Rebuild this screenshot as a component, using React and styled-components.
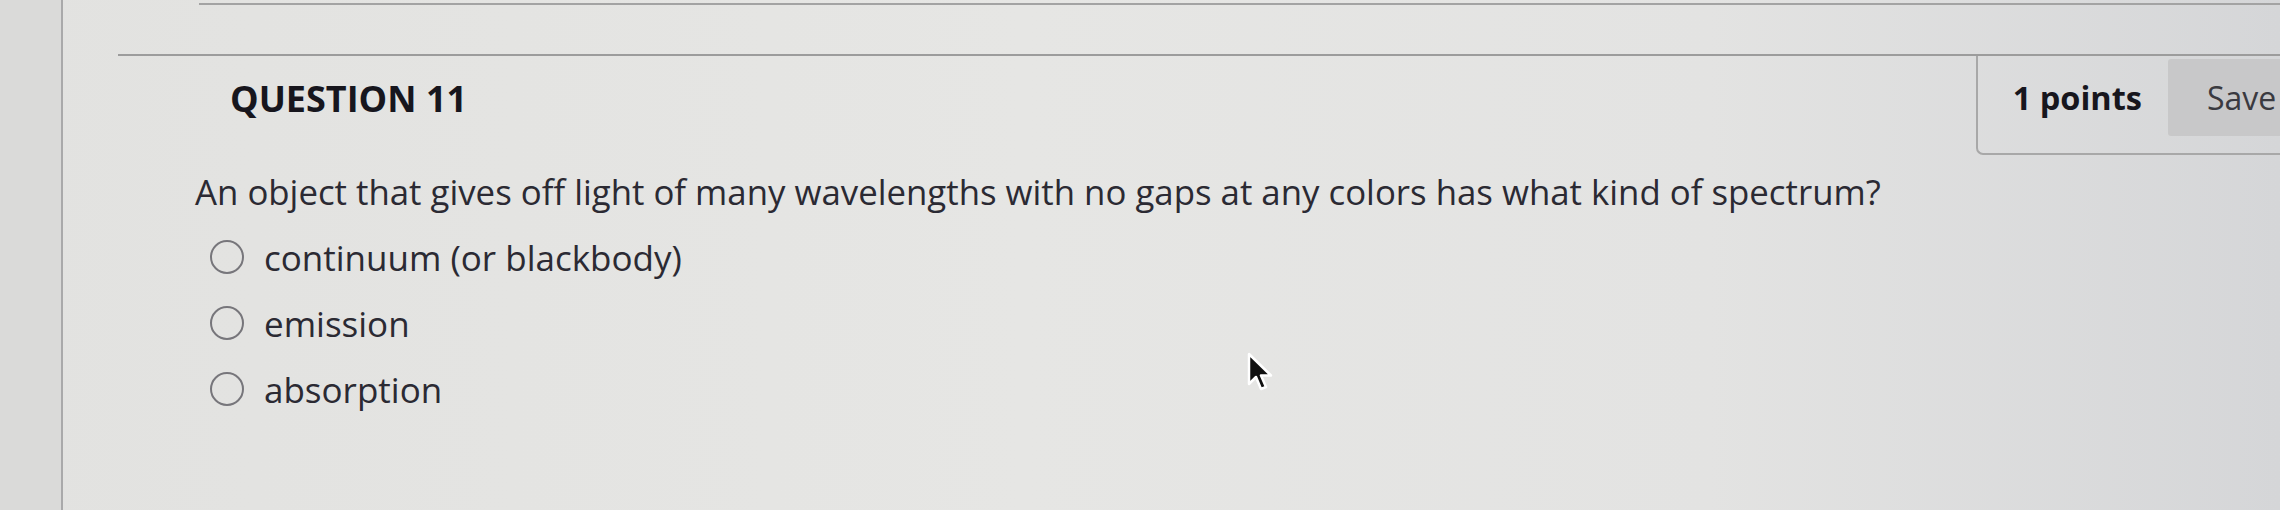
import React from 'react';
import styled, { createGlobalStyle } from 'styled-components';

const GlobalStyle = createGlobalStyle`
  html, body {
    margin: 0;
    padding: 0;
    background: #e3e3e1;
  }
  body {
    font-family: 'Open Sans', 'Noto Sans', sans-serif;
    color: #2b2a33;
  }
`;

const Page = styled.div`
  position: relative;
  display: flex;
  width: 2280px;
  height: 510px;
  overflow: hidden;
  background: linear-gradient(90deg, #e2e2e0 0%, #e6e6e4 45%, #e3e3e2 75%, #d5d6d8 100%);
`;

const Gutter = styled.div`
  width: 61px;
  flex-shrink: 0;
  background: #dadad9;
  border-right: 2px solid #a9a9aa;
`;

const Main = styled.div`
  flex: 1;
  display: flex;
  flex-direction: column;
`;

const TopRule = styled.div`
  margin: 3px 0 0 136px;
  border-top: 2px solid #a3a3a3;
`;

const Header = styled.div`
  display: flex;
  justify-content: space-between;
  align-items: flex-start;
  margin: 49px 0 0 55px;
  border-top: 2px solid #9c9c9c;
`;

const Title = styled.h2`
  margin: 0;
  padding: 21px 0 0 112px;
  font-size: 36px;
  font-weight: 700;
  line-height: 44px;
  color: #17161d;
`;

const PointsBox = styled.div`
  display: flex;
  align-items: flex-start;
  height: 97px;
  padding-left: 35px;
  border-left: 2px solid #a8a8a8;
  border-bottom: 2px solid #a8a8a8;
  border-bottom-left-radius: 7px;
`;

const Points = styled.span`
  margin-top: 20px;
  font-size: 32.5px;
  font-weight: 700;
  line-height: 44px;
  color: #17161d;
  white-space: nowrap;
`;

const SaveButton = styled.button`
  margin: 3px 0 0 26px;
  width: 112px;
  height: 77px;
  padding: 0 0 0 39px;
  border: none;
  border-top-left-radius: 3px;
  border-bottom-left-radius: 3px;
  background: #c8c8c9;
  font-family: 'Open Sans', 'Noto Sans', sans-serif;
  font-size: 32px;
  color: #3a3a40;
  text-align: left;
  white-space: nowrap;
  overflow: hidden;
`;

const Body = styled.div`
  display: flex;
  flex-direction: column;
  padding-left: 132px;
`;

const QuestionText = styled.p`
  margin: 15px 0 0;
  font-size: 34.8px;
  line-height: 44px;
  color: #2b2a33;
`;

const Options = styled.ul`
  list-style: none;
  margin: 21px 0 0 15px;
  padding: 0;
  display: flex;
  flex-direction: column;
  gap: 22px;
`;

const Option = styled.li`
  display: flex;
  align-items: center;
  height: 44px;
  gap: 20px;
  font-size: 35px;
  color: #2b2a33;
`;

const Radio = styled.span`
  width: 30px;
  height: 30px;
  flex-shrink: 0;
  border: 2.5px solid #77767b;
  border-radius: 50%;
`;

const Cursor = styled.svg`
  position: absolute;
  left: 1246px;
  top: 352px;
  width: 30px;
  height: 42px;
`;

const OPTIONS = ['continuum (or blackbody)', 'emission', 'absorption'];

const App = () => (
  <>
    <GlobalStyle />
    <Page>
      <Gutter />
      <Main>
        <TopRule />
        <Header>
          <Title>QUESTION 11</Title>
          <PointsBox>
            <Points>1 points</Points>
            <SaveButton>Save Answer</SaveButton>
          </PointsBox>
        </Header>
        <Body>
          <QuestionText>
            An object that gives off light of many wavelengths with no gaps at any colors has what kind of spectrum?
          </QuestionText>
          <Options>
            {OPTIONS.map((label) => (
              <Option key={label}>
                <Radio />
                {label}
              </Option>
            ))}
          </Options>
        </Body>
      </Main>
      <Cursor viewBox="0 0 30 42">
        <path
          d="M3 2 L3 32 L10 25 L15 37 L20 35 L15 23.5 L25 23.5 Z"
          fill="#111"
          stroke="#fff"
          strokeWidth="2.5"
          strokeLinejoin="round"
        />
      </Cursor>
    </Page>
  </>
);

export default App;
